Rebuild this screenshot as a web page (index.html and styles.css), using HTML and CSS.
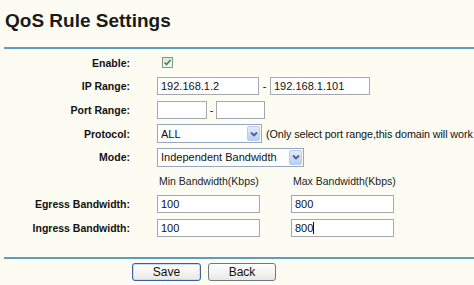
FILE: index.html
```html
<!DOCTYPE html>
<html lang="en">
<head>
  <meta charset="UTF-8" />
  <title>QoS Rule Settings</title>
  <link rel="stylesheet" href="styles.css">
</head>
<body>
  <h1 class="title">QoS Rule Settings</h1>
  <hr class="rule">

  <form class="settings">
    <div class="row">
      <span class="label">Enable:</span>
      <div class="field">
        <span class="check">
          <svg width="9" height="9" viewBox="0 0 9 9"><path d="M1.5 4.5 L3.5 6.5 L7.5 2" fill="none" stroke="#2a9a34" stroke-width="1.7"/></svg>
        </span>
      </div>
    </div>

    <div class="row">
      <span class="label">IP Range:</span>
      <div class="field">
        <input class="text w-ip" type="text" value="192.168.1.2">
        <span class="dash">-</span>
        <input class="text w-ip2" type="text" value="192.168.1.101">
      </div>
    </div>

    <div class="row">
      <span class="label">Port Range:</span>
      <div class="field">
        <input class="text w-port" type="text" value="">
        <span class="dash dash-port">-</span>
        <input class="text w-port2" type="text" value="">
      </div>
    </div>

    <div class="row">
      <span class="label">Protocol:</span>
      <div class="field">
        <span class="select-wrap">
          <select class="select w-proto">
            <option>ALL</option>
            <option>TCP</option>
            <option>UDP</option>
          </select>
          <span class="arrow"><svg width="8" height="6" viewBox="0 0 8 6"><path d="M1 1.5 L4 4.5 L7 1.5" fill="none" stroke="#4b5f8a" stroke-width="1.8"/></svg></span>
        </span>
        <span class="note">(Only select port range,this domain will work</span>
      </div>
    </div>

    <div class="row">
      <span class="label">Mode:</span>
      <div class="field">
        <span class="select-wrap">
          <select class="select w-mode">
            <option>Independent Bandwidth</option>
            <option>Shared Bandwidth</option>
          </select>
          <span class="arrow"><svg width="8" height="6" viewBox="0 0 8 6"><path d="M1 1.5 L4 4.5 L7 1.5" fill="none" stroke="#4b5f8a" stroke-width="1.8"/></svg></span>
        </span>
      </div>
    </div>

    <div class="row">
      <span class="label"></span>
      <div class="pair">
        <span class="bw-head">Min Bandwidth(Kbps)</span>
        <span class="bw-head">Max Bandwidth(Kbps)</span>
      </div>
    </div>

    <div class="row">
      <span class="label">Egress Bandwidth:</span>
      <div class="pair">
        <input class="text" type="text" value="100">
        <input class="text" type="text" value="800">
      </div>
    </div>

    <div class="row">
      <span class="label">Ingress Bandwidth:</span>
      <div class="pair">
        <input class="text" type="text" value="100">
        <span class="caret-wrap">
          <input class="text" type="text" value="800">
          <span class="caret"></span>
        </span>
      </div>
    </div>
  </form>

  <hr class="rule rule-bottom">

  <div class="actions">
    <button class="btn btn-save" type="button">Save</button>
    <button class="btn btn-back" type="button">Back</button>
  </div>
</body>
</html>
```

FILE: styles.css
```css
body {
  margin: 0;
  background: #fdfcf2;
  font-family: "Liberation Sans", Arial, sans-serif;
  color: #111;
  overflow: hidden;
}
.title {
  margin: 10px 0 0 5px;
  font-size: 19px;
  font-weight: bold;
  line-height: 22px;
  color: #1a1a1a;
}
.rule {
  height: 2px;
  margin: 15px 0 0 4px;
  border: 0;
  background: #5d9dbb;
}
.rule-bottom { margin-top: 17px; }

.settings { padding-top: 2px; }
.row {
  display: flex;
  align-items: center;
  height: 23.6px;
}
.label {
  flex: none;
  width: 130px;
  margin-right: 27px;
  text-align: right;
  font-size: 10.5px;
  font-weight: bold;
}
.field { display: flex; align-items: center; }

.text {
  box-sizing: border-box;
  height: 18px;
  margin: 0;
  padding: 0 3px;
  border: 1px solid #a4a9ad;
  border-radius: 0;
  background: #fff;
  font: 11px "Liberation Sans", Arial, sans-serif;
  color: #111;
  outline: none;
}
.w-ip { width: 102px; }
.w-ip2 { width: 100px; }
.w-port { width: 50px; }
.w-port2 { width: 49px; }
.dash { width: 11px; text-align: center; font-size: 11px; }
.dash-port { width: 9px; }

.check {
  box-sizing: border-box;
  width: 11px;
  height: 11px;
  margin-left: 5px;
  border: 1px solid #7f9a88;
  background: linear-gradient(#e4e4de, #fbfbf8);
  display: flex;
  align-items: center;
  justify-content: center;
}

.select-wrap { position: relative; display: inline-block; }
.select {
  -webkit-appearance: none;
  appearance: none;
  box-sizing: border-box;
  height: 19px;
  margin: 0;
  padding: 0 0 0 3px;
  border: 1px solid #97a8ba;
  border-radius: 0;
  background: #fff;
  font: 11px "Liberation Sans", Arial, sans-serif;
  color: #111;
  display: block;
}
.w-proto { width: 105px; }
.w-mode { width: 147px; }
.arrow {
  position: absolute;
  top: 2px;
  right: 2px;
  bottom: 2px;
  width: 13px;
  box-sizing: border-box;
  border: 1px solid #b9cbef;
  border-radius: 2px;
  background: linear-gradient(#e3ebfc, #b9cdf4);
  display: flex;
  align-items: center;
  justify-content: center;
  pointer-events: none;
}
.note {
  margin-left: 4px;
  font-size: 10.8px;
  letter-spacing: -0.1px;
  white-space: nowrap;
}

.pair {
  display: grid;
  grid-template-columns: 103px 103px;
  column-gap: 31px;
  align-items: center;
}
.pair .text { width: 103px; }
.bw-head { padding-left: 2px; font-size: 10.5px; color: #222; white-space: nowrap; }
.caret-wrap { position: relative; display: block; }
.caret-wrap .text { display: block; }
.caret {
  position: absolute;
  left: 22px;
  top: 3px;
  width: 1px;
  height: 12px;
  background: #111;
}

.actions {
  display: flex;
  gap: 7px;
  padding-left: 132px;
  margin-top: 4px;
}
.btn {
  width: 69px;
  height: 18px;
  padding: 0;
  border: 1px solid #6f7780;
  border-radius: 3px;
  background: linear-gradient(#ffffff, #e9e9e3);
  font: 12px "Liberation Sans", Arial, sans-serif;
  color: #111;
}
.btn-save { border-color: #3e5f98; box-shadow: inset 0 0 0 1px #c9daf6; }
.btn-back { width: 68px; }
```
